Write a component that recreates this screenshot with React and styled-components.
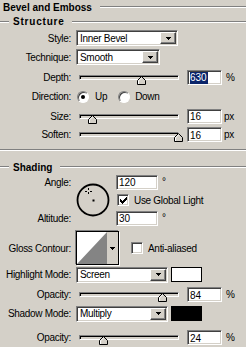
import React from "react";
import styled, { createGlobalStyle } from "styled-components";

const GlobalStyle = createGlobalStyle`
  html, body { margin: 0; padding: 0; background: #d4d0c8; }
  body { font-family: "Liberation Sans", Arial, sans-serif; font-size: 10px; color: #000; }
  * { box-sizing: border-box; }
`;

const Panel = styled.div`
  width: 246px;
  height: 347px;
  overflow: hidden;
  background: #d4d0c8;
  display: flex;
  flex-direction: column;
  letter-spacing: -0.3px;
`;

const TitleBar = styled.div`
  display: flex;
  align-items: center;
  height: 15px;
  padding-left: 3px;
`;

const TitleText = styled.span`
  font-weight: bold;
  letter-spacing: 0;
  margin-right: 8px;
  white-space: nowrap;
`;

const Etch = styled.div`
  flex: ${(p) => (p.$w ? `0 0 ${p.$w}px` : "1 1 auto")};
  height: 2px;
  border-top: 1px solid #808080;
  border-bottom: 1px solid #fff;
`;

const Separator = styled.div`
  height: 2px;
  margin-top: ${(p) => p.$mt || 0}px;
  border-top: 1px solid #808080;
  border-bottom: 1px solid #fff;
`;

const SectionHead = styled.div`
  display: flex;
  align-items: center;
  height: 14px;
  margin-top: ${(p) => p.$mt || 0}px;
`;

const SectionTitle = styled.span`
  font-weight: bold;
  letter-spacing: ${(p) => p.$ls || 0}px;
  margin: 0 ${(p) => p.$gap || 7}px 0 4px;
  white-space: nowrap;
`;

const Row = styled.div`
  display: flex;
  align-items: center;
  height: ${(p) => p.$h}px;
  margin-top: ${(p) => p.$mt || 0}px;
`;

const Label = styled.div`
  flex: 0 0 76px;
  padding-right: 5px;
  text-align: right;
  white-space: nowrap;
`;

const SelectBox = styled.div`
  width: ${(p) => p.$w}px;
  height: 16px;
  background: #fff;
  border: 1px solid;
  border-color: #808080 #fff #fff #808080;
  box-shadow: inset 1px 1px 0 #404040, inset -1px -1px 0 #d4d0c8;
  padding: 1px;
  display: flex;
  align-items: stretch;
`;

const SelectText = styled.span`
  flex: 1 1 auto;
  padding-left: 2px;
  display: flex;
  align-items: center;
  white-space: nowrap;
  overflow: hidden;
`;

const DropButton = styled.span`
  flex: 0 0 16px;
  background: #d4d0c8;
  border: 1px solid;
  border-color: #fff #404040 #404040 #fff;
  box-shadow: inset -1px -1px 0 #808080;
  display: flex;
  align-items: center;
  justify-content: center;
`;

const Arrow = () => (
  <svg width="5" height="3" viewBox="0 0 5 3" shapeRendering="crispEdges">
    <rect x="0" y="0" width="5" height="1" fill="#000" />
    <rect x="1" y="1" width="3" height="1" fill="#000" />
    <rect x="2" y="2" width="1" height="1" fill="#000" />
  </svg>
);

const Select = ({ w, children }) => (
  <SelectBox $w={w}>
    <SelectText>{children}</SelectText>
    <DropButton>
      <Arrow />
    </DropButton>
  </SelectBox>
);

const Track = styled.div`
  position: relative;
  flex: 0 0 100px;
  height: 5px;
  margin-left: 3px;
  background: #d4d0c8;
  border: 1px solid;
  border-color: #808080 #fff #fff #808080;
  box-shadow: inset 1px 1px 0 #000;
`;

const Thumb = styled.span`
  position: absolute;
  top: 0;
  width: 9px;
  height: 9px;
  display: block;
  line-height: 0;
`;

const Slider = ({ value }) => (
  <Track>
    <Thumb style={{ left: `calc(${value * 100}% - 5px)` }}>
      <svg width="9" height="9" viewBox="0 0 9 9">
        <path d="M4.5 0.5 L8.5 4.5 L8.5 8.5 L0.5 8.5 L0.5 4.5 Z" fill="#d4d0c8" stroke="#000" />
        <path d="M1.5 8 L1.5 4.9 L4.5 1.9" fill="none" stroke="#fff" />
      </svg>
    </Thumb>
  </Track>
);

const Field = styled.div`
  flex: 0 0 ${(p) => p.$w || 35}px;
  height: 15px;
  margin-left: ${(p) => p.$ml || 0}px;
  background: #fff;
  border: 1px solid;
  border-color: #808080 #fff #fff #808080;
  box-shadow: inset 1px 1px 0 #404040, inset -1px -1px 0 #d4d0c8;
  padding: 1px 1px 0 2px;
  display: flex;
  align-items: center;
  letter-spacing: 0;
`;

const Selected = styled.span`
  background: #0a246a;
  color: #fff;
  height: 12px;
  line-height: 12px;
  padding-right: 1px;
`;

const Unit = styled.span`
  margin-left: ${(p) => p.$ml || 3}px;
  align-self: ${(p) => (p.$top ? "flex-start" : "center")};
  margin-top: ${(p) => (p.$top ? 2 : 0)}px;
`;

const Radio = styled.span`
  flex: 0 0 12px;
  width: 12px;
  height: 12px;
  margin-left: ${(p) => p.$ml || 0}px;
  border-radius: 50%;
  background: #fff;
  border: 1px solid;
  border-color: #808080 #fff #fff #808080;
  box-shadow: inset 1px 1px 0 #404040;
  display: flex;
  align-items: center;
  justify-content: center;
  &::after {
    content: "";
    width: 4px;
    height: 4px;
    border-radius: 50%;
    background: #000;
    display: ${(p) => (p.$on ? "block" : "none")};
  }
`;

const Text = styled.span`
  margin-left: ${(p) => p.$ml || 0}px;
  white-space: nowrap;
`;

const CheckBox = styled.span`
  flex: 0 0 12px;
  width: 12px;
  height: 12px;
  margin-left: ${(p) => p.$ml || 0}px;
  background: #fff;
  border: 1px solid;
  border-color: #808080 #fff #fff #808080;
  box-shadow: inset 1px 1px 0 #404040, inset -1px -1px 0 #d4d0c8;
  display: flex;
  align-items: center;
  justify-content: center;
`;

const Check = () => (
  <svg width="7" height="7" viewBox="0 0 7 7" shapeRendering="crispEdges">
    <path
      d="M6 0h1v3h-1v1h-1v1h-1v1h-1v1h-1v-1h-1v-1h-1v-3h1v1h1v1h1v-1h1v-1h1z"
      fill="#000"
    />
  </svg>
);

const AngleBlock = styled.div`
  display: grid;
  grid-template-columns: 76px 40px 1fr;
  grid-template-rows: 16px 20px 16px;
  align-items: center;
`;

const GridLabel = styled(Label)`
  grid-column: 1;
  grid-row: ${(p) => p.$row};
`;

const Dial = styled.div`
  grid-column: 2;
  grid-row: 1 / 4;
  width: 34px;
  height: 34px;
  line-height: 0;
`;

const GridCell = styled.div`
  grid-column: 3;
  grid-row: ${(p) => p.$row};
  display: flex;
  align-items: center;
  height: 100%;
`;

const ContourBox = styled.div`
  width: 43px;
  height: 34px;
  border: 1px solid #000;
  box-shadow: -1px -1px 0 #808080, 1px 1px 0 #fff;
  display: flex;
  background: #fff;
`;

const ContourPreview = styled.div`
  flex: 1 1 auto;
  line-height: 0;
`;

const ContourDrop = styled.div`
  flex: 0 0 11px;
  background: #d4d0c8;
  display: flex;
  align-items: center;
  justify-content: center;
`;

const Swatch = styled.div`
  width: 31px;
  height: 15px;
  margin-left: 3px;
  background: ${(p) => p.$color};
  border: 1px solid #000;
`;

export default function App() {
  return (
    <>
      <GlobalStyle />
      <Panel>
        <TitleBar>
          <TitleText>Bevel and Emboss</TitleText>
          <Etch />
        </TitleBar>

        <SectionHead>
          <Etch $w={9} />
          <SectionTitle $ls={0.8} $gap={7}>Structure</SectionTitle>
          <Etch />
        </SectionHead>

        <Row $h={19}>
          <Label>Style:</Label>
          <Select w={102}>Inner Bevel</Select>
        </Row>
        <Row $h={20}>
          <Label>Technique:</Label>
          <Select w={84}>Smooth</Select>
        </Row>
        <Row $h={20}>
          <Label>Depth:</Label>
          <Slider value={0.635} />
          <Field $ml={8}>
            <Selected>630</Selected>
          </Field>
          <Unit $ml={4}>%</Unit>
        </Row>
        <Row $h={20}>
          <Label>Direction:</Label>
          <Radio $on $ml={1} />
          <Text $ml={6}>Up</Text>
          <Radio $ml={11} />
          <Text $ml={5}>Down</Text>
        </Row>
        <Row $h={19}>
          <Label>Size:</Label>
          <Slider value={0.13} />
          <Field $ml={8}>16</Field>
          <Unit $ml={2}>px</Unit>
        </Row>
        <Row $h={19}>
          <Label>Soften:</Label>
          <Slider value={1.01} />
          <Field $ml={8}>16</Field>
          <Unit $ml={2}>px</Unit>
        </Row>

        <Separator $mt={5} />

        <SectionHead $mt={9}>
          <Etch $w={9} />
          <SectionTitle $gap={8}>Shading</SectionTitle>
          <Etch />
        </SectionHead>

        <AngleBlock>
          <GridLabel $row={1}>Angle:</GridLabel>
          <Dial>
            <svg width="34" height="34" viewBox="0 0 34 34">
              <circle cx="17" cy="17" r="15.5" fill="none" stroke="#000" strokeWidth="1.8" />
              <rect x="16.5" y="16.5" width="2" height="2" fill="#000" />
              <g fill="#000" shapeRendering="crispEdges">
                <rect x="12" y="5" width="1" height="2" />
                <rect x="12" y="9" width="1" height="2" />
                <rect x="9" y="8" width="2" height="1" />
                <rect x="14" y="8" width="2" height="1" />
              </g>
            </svg>
          </Dial>
          <GridCell $row={1}>
            <Field $w={42}>120</Field>
            <Unit $top $ml={4}>°</Unit>
          </GridCell>
          <GridCell $row={2}>
            <CheckBox $ml={1}>
              <Check />
            </CheckBox>
            <Text $ml={5}>Use Global Light</Text>
          </GridCell>
          <GridLabel $row={3}>Altitude:</GridLabel>
          <GridCell $row={3}>
            <Field $w={42}>30</Field>
            <Unit $top $ml={4}>°</Unit>
          </GridCell>
        </AngleBlock>

        <Row $h={34} $mt={5}>
          <Label>Gloss Contour:</Label>
          <ContourBox>
            <ContourPreview>
              <svg width="30" height="32" viewBox="0 0 30 32">
                <rect width="30" height="32" fill="#fff" />
                <polygon points="0,32 30,0 30,32" fill="#848484" />
              </svg>
            </ContourPreview>
            <ContourDrop>
              <Arrow />
            </ContourDrop>
          </ContourBox>
          <CheckBox $ml={12} />
          <Text $ml={5}>Anti-aliased</Text>
        </Row>

        <Row $h={20}>
          <Label>Highlight Mode:</Label>
          <Select w={92}>Screen</Select>
          <Swatch $color="#fff" />
        </Row>
        <Row $h={20}>
          <Label>Opacity:</Label>
          <Slider value={0.845} />
          <Field $ml={8}>84</Field>
          <Unit $ml={4}>%</Unit>
        </Row>
        <Row $h={19}>
          <Label>Shadow Mode:</Label>
          <Select w={92}>Multiply</Select>
          <Swatch $color="#000" />
        </Row>
        <Row $h={19} $mt={5}>
          <Label>Opacity:</Label>
          <Slider value={0.245} />
          <Field $ml={8}>24</Field>
          <Unit $ml={4}>%</Unit>
        </Row>
      </Panel>
    </>
  );
}
